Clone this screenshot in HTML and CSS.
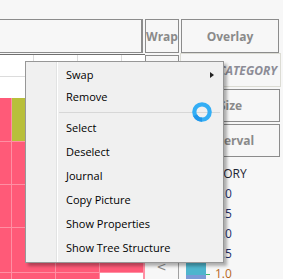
FILE: index.html
```html
<!DOCTYPE html>
<html>
<head>
<meta charset="utf-8">
<link rel="stylesheet" href="styles.css">
</head>
<body>
<div class="page">
  <div class="topgap"></div>
  <div class="header">
    <div class="hbox hbox-main"></div>
    <div class="hbox hbox-wrap">Wrap</div>
    <div class="hbox hbox-overlay">Overlay</div>
  </div>
  <div class="main">
    <div class="chart">
      <div class="plain">
        <div class="pc"></div><div class="pc"></div><div class="pc"></div><div class="pc"></div>
        <div class="pc"></div><div class="pc"></div><div class="pc"></div><div class="pc"></div>
      </div>
      <div class="heat">
        <div class="hc"></div><div class="hc olive"></div><div class="hc"></div><div class="hc"></div>
        <div class="hc"></div><div class="hc"></div><div class="hc"></div><div class="hc"></div>
        <div class="hc"></div><div class="hc"></div><div class="hc"></div><div class="hc"></div>
        <div class="hc"></div><div class="hc"></div><div class="hc"></div><div class="hc"></div>
        <div class="hc"></div><div class="hc"></div><div class="hc"></div><div class="hc white"></div>
      </div>
    </div>
    <div class="wrapcol">
      <div class="wrapzone"></div>
      <div class="collapse">&lt;</div>
    </div>
    <div class="side">
      <div class="drop">CATEGORY</div>
      <div class="sbtn">Size</div>
      <div class="sbtn">Interval</div>
      <div class="legend">
        <div class="ltitle">CATEGORY</div>
        <div class="lbody">
          <div class="lbar"><div class="lbar-top"></div><div class="lbar-bot"></div></div>
          <div class="lticks">
            <div class="tick"><span class="tk"></span><span class="lv">3.0</span></div>
            <div class="tick"><span class="tk"></span><span class="lv">2.5</span></div>
            <div class="tick"><span class="tk"></span><span class="lv">2.0</span></div>
            <div class="tick"><span class="tk"></span><span class="lv">1.5</span></div>
            <div class="tick tick-last"><span class="tk"></span><span class="lv">1.0</span></div>
          </div>
        </div>
      </div>
    </div>
  </div>

  <div class="menu">
    <div class="gutter"></div>
    <div class="items">
      <div class="mi mi-swap">Swap<span class="arrow"></span></div>
      <div class="mi">Remove</div>
      <div class="sep"></div>
      <div class="mi">Select</div>
      <div class="mi">Deselect</div>
      <div class="mi">Journal</div>
      <div class="mi">Copy Picture</div>
      <div class="mi">Show Properties</div>
      <div class="mi">Show Tree Structure</div>
    </div>
  </div>

  <svg class="busy" width="22" height="22" viewBox="0 0 22 22">
    <circle cx="11" cy="11" r="7.7" fill="none" stroke="#34aef5" stroke-width="4.2"/>
    <path d="M4.2 14.4 A7.7 7.7 0 0 0 11 18.7" fill="none" stroke="#2196ea" stroke-width="4.2"/>
  </svg>
</div>
</body>
</html>
```
FILE: styles.css
```css
* { box-sizing: border-box; }
html, body { margin: 0; padding: 0; }
body {
  background: #f7f7f7;
  font-family: "Open Sans", "Noto Sans", sans-serif;
  overflow: hidden;
}
.page {
  position: relative;
  width: 283px;
  height: 279px;
  overflow: hidden;
}
.topgap { height: 19px; }
.header {
  display: flex;
  height: 34px;
  gap: 2px;
}
.hbox {
  flex-shrink: 0;
  border: 1px solid #8c8c8c;
  display: flex;
  align-items: center;
  justify-content: center;
  font-weight: 700;
  font-size: 12px;
  color: #8a8a8a;
  background: #f7f7f7;
}
.hbox-main { width: 145px; margin-left: -2px; border-width: 1px 2px 1px 1px; }
.hbox-wrap { width: 34px; }
.hbox-overlay { width: 98px; }

.main {
  display: flex;
  height: 226px;
}
.chart {
  flex-shrink: 0;
  width: 145px;
  margin-top: 1px;
  border-top: 1px solid #707070;
  display: flex;
  flex-direction: column;
  overflow: hidden;
}
.plain {
  flex-shrink: 0;
  display: grid;
  grid-template-columns: 43px 43px 43px 43px;
  grid-template-rows: 21px 21px;
  gap: 1px;
  background: #dcdcdc;
  margin-left: -10px;
  height: 43px;
}
.pc { background: #ffffff; }
.heat {
  flex-shrink: 0;
  display: grid;
  grid-template-columns: 43px 43px 43px 43px;
  grid-template-rows: 43px 42px 42px 44px 20px;
  gap: 1px;
  background: #ff8fa3;
  margin-left: -32px;
}
.hc { background: #ff5a78; }
.hc.olive { background: #b8bf3a; }
.hc.white { background: #ffffff; }

.wrapcol {
  flex-shrink: 0;
  width: 34px;
  display: flex;
  flex-direction: column;
}
.wrapzone {
  flex-shrink: 0;
  margin-top: 2px;
  height: 204px;
  border: 1px solid #8c8c8c;
}
.collapse {
  flex: 1;
  border-right: 1px solid #a0a0a0;
  color: #8a8a8a;
  font-family: "DejaVu Sans", sans-serif;
  font-size: 12px;
  display: flex;
  justify-content: center;
  padding-top: 1px;
}

.side {
  flex-shrink: 0;
  width: 101px;
  margin-left: 1px;
  display: flex;
  flex-direction: column;
}
.drop {
  flex-shrink: 0;
  height: 34px;
  border: 1px solid #dcdcd4;
  display: flex;
  align-items: center;
  justify-content: flex-end;
  padding-right: 3px;
  font-weight: 700;
  font-style: italic;
  font-size: 12px;
  color: #8c8c96;
}
.sbtn {
  flex-shrink: 0;
  margin-top: 2px;
  margin-left: 1px;
  width: 99px;
  height: 33px;
  border: 1px solid #8c8c8c;
  display: flex;
  align-items: center;
  justify-content: center;
  font-weight: 700;
  font-size: 12px;
  color: #8a8a8a;
}
.legend {
  flex-shrink: 0;
  padding-top: 9px;
  padding-left: 6px;
}
.ltitle {
  font-size: 12px;
  color: #1d2433;
  padding-left: 0;
  height: 16px;
  line-height: 16px;
}
.lbody {
  display: flex;
  margin-top: 2px;
}
.lbar {
  width: 20px;
  height: 100px;
  display: flex;
  flex-direction: column;
}
.lbar-top { height: 91px; background: #4eb5cd; }
.lbar-bot { flex: 1; background: #7a9ad6; }
.lticks {
  display: flex;
  flex-direction: column;
}
.tick {
  height: 20px;
  display: flex;
  align-items: center;
}
.tk {
  width: 4px;
  height: 1px;
  background: #7ad08a;
}
.lv {
  margin-left: 5px;
  font-size: 12px;
  line-height: 14px;
  color: #1e2f6a;
}
.tick-last .lv { color: #b8681e; }
.tick-last .tk { background: #3cb868; }

.menu {
  position: absolute;
  left: 25px;
  top: 61px;
  width: 199px;
  height: 202px;
  background: #f0f0f0;
  border: 1px solid #979797;
  box-shadow: 3px 3px 3px rgba(0,0,0,0.3);
  display: flex;
  font-family: "Open Sans", "Noto Sans", sans-serif;
  font-size: 11px;
  color: #000;
}
.gutter {
  width: 31px;
  border-right: 1px solid #e2e3e3;
  box-shadow: 1px 0 0 #ffffff;
}
.items {
  flex: 1;
  padding-top: 1px;
  padding-left: 9px;
}
.mi {
  height: 24px;
  line-height: 24px;
  position: relative;
}
.mi-swap { height: 22px; line-height: 24px; }
.arrow {
  position: absolute;
  right: 9px;
  top: 9px;
  width: 0;
  height: 0;
  border-top: 3.5px solid transparent;
  border-bottom: 3.5px solid transparent;
  border-left: 4px solid #222;
}
.sep {
  margin-left: -7px;
  margin-right: 3px;
  border-top: 1px solid #d7d7d7;
  margin-top: 3px;
  height: 4px;
}
.busy {
  position: absolute;
  left: 191px;
  top: 101px;
}
```
